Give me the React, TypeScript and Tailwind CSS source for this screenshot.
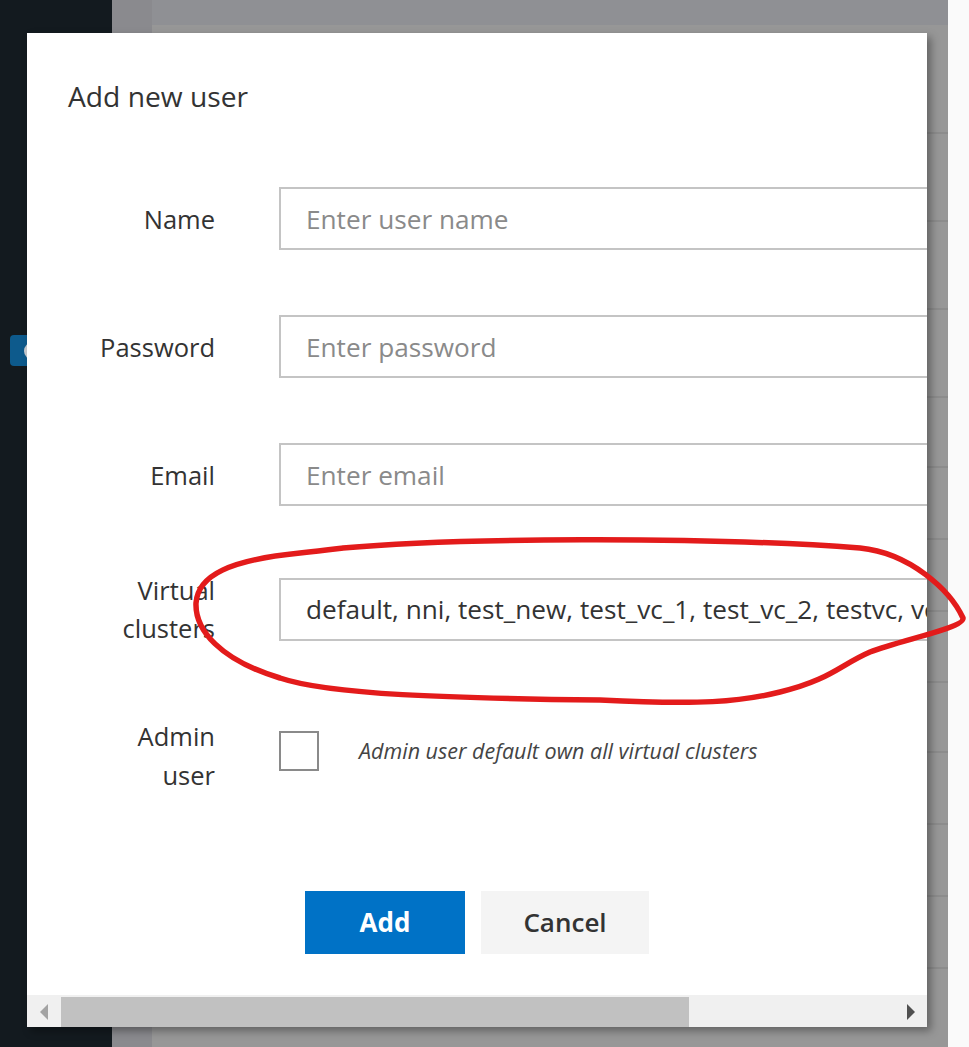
import React from 'react';

const font = { fontFamily: '"Open Sans", "Noto Sans", Arial, sans-serif' };

const FormRow: React.FC<{ label: React.ReactNode; children: React.ReactNode; className?: string }> = ({
  label,
  children,
  className = '',
}) => (
  <div className={`flex items-center ${className}`}>
    <div className="w-[148px] shrink-0 text-right text-[25.5px] leading-[38px] text-[#333]">{label}</div>
    <div className="ml-[64px] shrink-0">{children}</div>
  </div>
);

const TextInput: React.FC<{ placeholder?: string; value?: string; type?: string }> = ({ placeholder, value, type = 'text' }) => (
  <input
    type={type}
    placeholder={placeholder}
    defaultValue={value}
    readOnly={value !== undefined}
    className="h-[63px] w-[760px] border-2 border-[#c4c4c4] bg-white px-[25px] text-[26.2px] text-[#333] outline-none placeholder:text-[#8a8a8a]"
    style={font}
  />
);

const Background: React.FC = () => (
  <div className="absolute inset-0 flex">
    <div className="relative w-[112px] shrink-0 bg-[#131a1f]">
      <div className="absolute left-[10px] top-[335px] flex h-[31px] w-[40px] items-center rounded-[4px] bg-[#0d5a8c] pl-[14px]">
        <div className="h-[18px] w-[18px] rounded-full bg-[#c9ccd0]" />
      </div>
    </div>
    <div className="w-[40px] shrink-0 bg-[#8a8a8e]" />
    <div className="flex flex-1 flex-col bg-[#979797]">
      <div className="h-[25px] bg-[#8f9094]" />
      <div className="h-[109px] border-b-2 border-[#8c8c8c]" />
      <div className="h-[88px] border-b-2 border-[#8c8c8c]" />
      <div className="h-[88px] border-b-2 border-[#8c8c8c]" />
      <div className="h-[88px] border-b-2 border-[#8c8c8c]" />
      <div className="h-[70px] border-b-2 border-[#8c8c8c]" />
      <div className="h-[72px] border-b-2 border-[#8c8c8c]" />
      <div className="h-[72px] border-b-2 border-[#8c8c8c]" />
      <div className="h-[71px] border-b-2 border-[#8c8c8c]" />
      <div className="h-[70px] border-b-2 border-[#8c8c8c]" />
      <div className="h-[72px] border-b-2 border-[#8c8c8c]" />
      <div className="h-[72px] border-b-2 border-[#8c8c8c]" />
      <div className="h-[72px] border-b-2 border-[#8c8c8c]" />
    </div>
    <div className="w-[21px] shrink-0 bg-[#fafafa]" />
  </div>
);

const Scrollbar: React.FC = () => (
  <div className="flex h-[32px] shrink-0 items-stretch bg-[#f0f0f0] pt-[2px]">
    <div className="flex w-[34px] items-center justify-center">
      <svg width="9" height="16" viewBox="0 0 9 16">
        <path d="M8 0 L0 8 L8 16 Z" fill="#a3a3a3" />
      </svg>
    </div>
    <div className="w-[628px] bg-[#c1c1c1]" />
    <div className="flex-1" />
    <div className="flex w-[34px] items-center justify-center">
      <svg width="9" height="16" viewBox="0 0 9 16">
        <path d="M1 0 L9 8 L1 16 Z" fill="#505050" />
      </svg>
    </div>
  </div>
);

const App: React.FC = () => {
  return (
    <div className="relative h-[1047px] w-[969px] overflow-hidden" style={font}>
      <Background />

      <div className="absolute left-[27px] top-[33px] flex h-[994px] w-[900px] flex-col bg-white shadow-[4px_4px_8px_rgba(0,0,0,0.35)]">
        <div className="flex-1 overflow-hidden">
          <div className="pl-[41px] pt-[44px]">
            <h2 className="text-[28.2px] leading-[38px] text-[#333]">Add new user</h2>
          </div>

          <div className="mt-[72px] pl-[40px]">
            <FormRow label="Name" className="mb-[65px]">
              <TextInput placeholder="Enter user name" />
            </FormRow>
            <FormRow label="Password" className="mb-[65px]">
              <TextInput placeholder="Enter password" type="password" />
            </FormRow>
            <FormRow label="Email" className="mb-[65px]">
              <TextInput placeholder="Enter email" />
            </FormRow>
            <FormRow label="Virtual clusters" className="mb-[70px]">
              <TextInput value="default, nni, test_new, test_vc_1, test_vc_2, testvc, vc1, vc2" />
            </FormRow>
            <div className="flex items-start">
              <div className="w-[148px] shrink-0 text-right text-[25.5px] leading-[39px] text-[#333]">
                Admin
                <br />
                user
              </div>
              <div className="ml-[64px] mt-[14px] flex items-center">
                <div className="h-[40px] w-[40px] border-2 border-[#8a8a8a] bg-white" />
                <span className="ml-[40px] text-[21.5px] italic text-[#444]">Admin user default own all virtual clusters</span>
              </div>
            </div>
          </div>

          <div className="mt-[96px] flex justify-center gap-[16px]">
            <button className="h-[63px] w-[160px] bg-[#0072c6] text-[26px] font-bold text-white">Add</button>
            <button className="h-[63px] w-[168px] bg-[#f4f4f4] text-[26px] font-semibold text-[#333]">Cancel</button>
          </div>
        </div>
        <Scrollbar />
      </div>

      <svg className="pointer-events-none absolute inset-0" width="969" height="1047" viewBox="0 0 969 1047">
        <path
          d="M 343 548 C 450 538, 700 536, 860 548 C 910 553, 950 590, 963 618 C 965 628, 900 640, 870 652 C 840 665, 830 680, 780 692 C 740 702, 700 705, 600 700 C 450 698, 330 695, 280 678 C 220 660, 195 630, 196 603 C 198 575, 230 560, 300 553 C 320 551, 335 549, 343 548"
          fill="none"
          stroke="#e31b1b"
          strokeWidth="5.5"
          strokeLinecap="round"
          strokeLinejoin="round"
        />
      </svg>
    </div>
  );
};

export default App;
